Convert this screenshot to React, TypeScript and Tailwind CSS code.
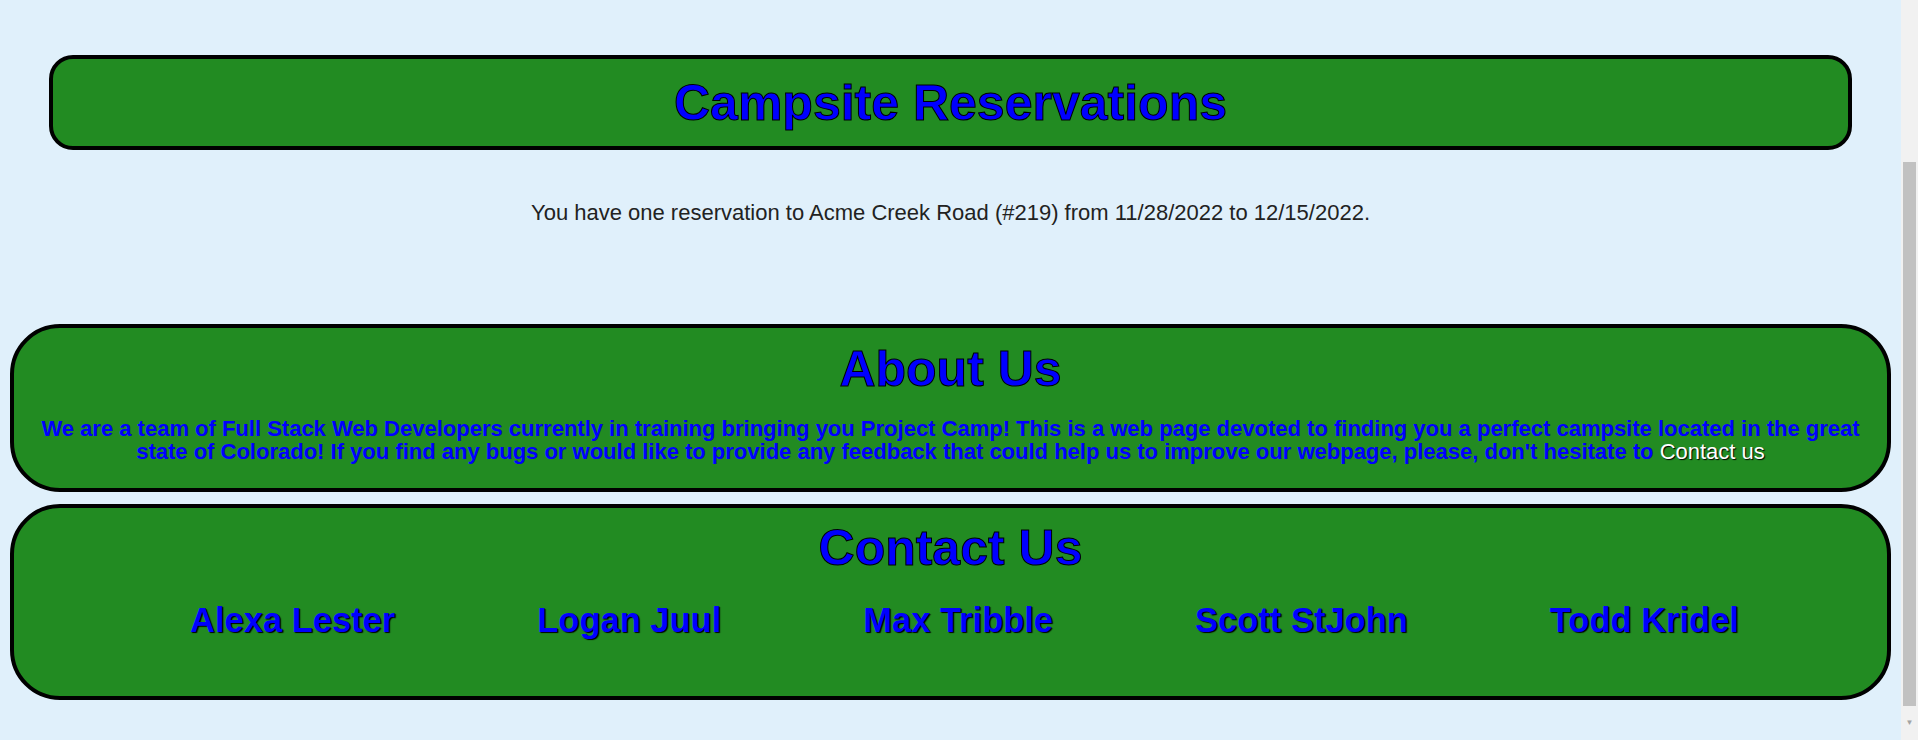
import React from 'react';

const team = ['Alexa Lester', 'Logan Juul', 'Max Tribble', 'Scott StJohn', 'Todd Kridel'];

export default function App() {
  return (
    <div className="flex h-[740px] overflow-hidden bg-[#e0f0fb] font-['Liberation_Sans',Arial,sans-serif]">
      <main className="flex-1 pt-[55px]">
        {/* header */}
        <div className="mx-[49px] h-[95px] flex items-center justify-center bg-[#228b22] border-4 border-black rounded-[24px]">
          <h1 className="text-[50px] font-bold leading-[58px] text-[#0000ff] [-webkit-text-stroke:1px_black]">
            Campsite Reservations
          </h1>
        </div>

        <p className="mt-[50px] text-center text-[22px] leading-[25px] text-[#222]">
          You have one reservation to Acme Creek Road (#219) from 11/28/2022 to 12/15/2022.
        </p>

        {/* about */}
        <section className="mx-[10px] mt-[99px] bg-[#228b22] border-4 border-black rounded-[50px] px-4 pt-[12px] pb-[25px] text-center">
          <h1 className="text-[50px] font-bold leading-[58px] text-[#0000ff] [-webkit-text-stroke:1px_black]">About Us</h1>
          <p className="mt-[19px] text-[22px] leading-[23px] font-bold text-[#0000ff]">
            We are a team of Full Stack Web Developers currently in training bringing you Project Camp! This is a web page
            devoted to finding you a perfect campsite located in the great state of Colorado! If you find any bugs or would
            like to provide any feedback that could help us to improve our webpage, please, don't hesitate to{' '}
            <a href="#" className="font-normal text-white [text-shadow:1px_1px_1px_black]">
              Contact us
            </a>
          </p>
        </section>

        {/* contact */}
        <section className="mx-[10px] mt-[12px] bg-[#228b22] border-4 border-black rounded-[50px] pt-[11px] pb-[56px] text-center">
          <h1 className="text-[50px] font-bold leading-[58px] text-[#0000ff] [-webkit-text-stroke:1px_black]">Contact Us</h1>
          <ul className="mt-[24px] pl-[34px] pr-[6px] flex justify-evenly">
            {team.map((name) => (
              <li key={name} className="text-[34.5px] leading-[39px] font-bold text-[#0000ff] [text-shadow:1px_1px_1px_black]">
                {name}
              </li>
            ))}
          </ul>
        </section>
      </main>

      {/* scrollbar */}
      <div className="w-[17px] flex flex-col bg-[#f1f1f1]">
        <div className="h-[162px]" />
        <div className="h-[544px] mx-[2px] bg-[#c1c1c1]" />
        <div className="flex-1 flex items-center justify-center text-[8px] leading-none text-[#a3a3a3]">▼</div>
      </div>
    </div>
  );
}
